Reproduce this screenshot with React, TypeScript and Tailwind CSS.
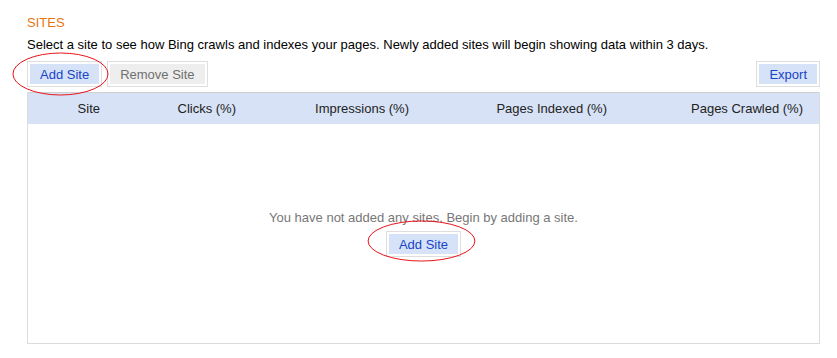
import React from 'react'

const COLUMNS = ['Site', 'Clicks (%)', 'Impressions (%)', 'Pages Indexed (%)', 'Pages Crawled (%)']

const Ring = ({ className }: { className: string }) => (
  <svg className={`pointer-events-none absolute ${className}`} viewBox="0 0 100 44" preserveAspectRatio="none">
    <ellipse cx="50" cy="22" rx="49" ry="21" fill="none" stroke="#e8141b" strokeWidth="1" vectorEffect="non-scaling-stroke" />
  </svg>
)

const Btn = ({ label, muted }: { label: string; muted?: boolean }) => (
  <div className="border border-[#dedede] p-[2px] bg-white">
    <div
      className={`h-[20px] px-[10px] flex items-center leading-none ${
        muted ? 'bg-[#eeeeee] text-[#6f6f6f]' : 'bg-[#d6e2f7] text-[#1744c8]'
      }`}
    >
      {label}
    </div>
  </div>
)

export default function App() {
  return (
    <div className="relative w-[837px] h-[358px] bg-white pt-[15px] pl-[27px] pr-[17px] font-['Liberation_Sans',Arial,sans-serif] text-[13px] text-black">
      <div className="text-[#e8740f] leading-[15px]">SITES</div>
      <div className="mt-[7px] leading-[15px]">
        Select a site to see how Bing crawls and indexes your pages. Newly added sites will begin showing data within 3 days.
      </div>

      <div className="mt-[9px] flex items-center justify-between">
        <div className="flex gap-[5px]">
          <Btn label="Add Site" />
          <Btn label="Remove Site" muted />
        </div>
        <Btn label="Export" />
      </div>

      <div className="mt-[5px] border-x border-b border-[#dcdcdc]">
        <div className="grid grid-cols-[88px_136px_173px_198px_1fr] h-[32px] items-center bg-[#d7e2f6] border-t border-[#d0d0d0] text-[#222]">
          {COLUMNS.map((c) => (
            <div key={c} className="text-right pr-[16px]">{c}</div>
          ))}
        </div>
        <div className="h-[219px] flex flex-col items-center justify-center gap-[6px] text-[#777]">
          <div className="leading-[15px]">You have not added any sites. Begin by adding a site.</div>
          <Btn label="Add Site" />
        </div>
      </div>

      <Ring className="left-[12px] top-[52px] w-[97px] h-[44px]" />
      <Ring className="left-[367px] top-[220px] w-[109px] h-[42px]" />
    </div>
  )
}
